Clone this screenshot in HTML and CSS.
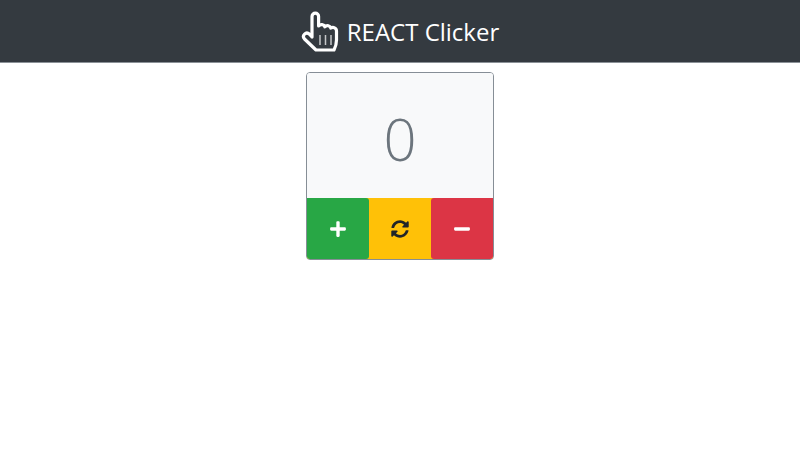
FILE: index.html
```html
<!DOCTYPE html>
<html lang="en">
<head>
    <meta charset="UTF-8">
    <meta name="viewport" content="width=device-width, initial-scale=1.0">
    <title>REACT Clicker</title>
    <link rel="stylesheet" href="styles.css">
</head>
<body>
    <header class="navbar">
        <svg class="logo" viewBox="0 0 40 44" aria-hidden="true">
            <path class="logo-hand" d="M11 28 V7.500 a3.300 3.300 0 0 1 6.600 0 V17 c2-2.200 5.400-1.800 6.200 .8 c2-2 5.400-1.200 6 1.200 c2.400-1.200 5.700-.2 5.700 3 V31 c0 4-1 7-2.500 10 H15 L3.500 30 c-3-3.500 1.500-8 5-4.800 L11 28"/>
            <path class="logo-lines" d="M19 26 V36 M24.500 26 V36 M30 26 V36"/>
        </svg>
        <h1 class="brand">REACT Clicker</h1>
    </header>

    <main class="clicker">
        <div class="count">0</div>
        <div class="actions">
            <button class="btn btn-add" type="button">
                <svg class="icon" viewBox="0 0 448 512"><path d="M416 208H272V64c0-17.670-14.330-32-32-32h-32c-17.670 0-32 14.330-32 32v144H32c-17.670 0-32 14.330-32 32v32c0 17.670 14.330 32 32 32h144v144c0 17.670 14.330 32 32 32h32c17.670 0 32-14.330 32-32V304h144c17.670 0 32-14.330 32-32v-32c0-17.670-14.330-32-32-32z"/></svg>
            </button>
            <button class="btn btn-reset" type="button">
                <svg class="icon" viewBox="0 0 512 512"><path d="M370.720 133.280C339.458 104.008 298.888 87.962 255.848 88c-77.458.068-144.328 53.178-162.791 126.850-1.344 5.363-6.122 9.150-11.651 9.150H24.103c-7.498 0-13.194-6.807-11.807-14.176C33.933 94.924 134.813 8 256 8c66.448 0 126.791 26.136 171.315 68.685L463.030 40.970C478.149 25.851 504 36.559 504 57.941V192c0 13.255-10.745 24-24 24H345.941c-21.382 0-32.090-25.851-16.971-40.971l41.750-41.749zM32 296h134.059c21.382 0 32.090 25.851 16.971 40.971l-41.750 41.750c31.262 29.273 71.835 45.319 114.876 45.280 77.418-.07 144.315-53.144 162.787-126.849 1.344-5.363 6.122-9.150 11.651-9.150h57.304c7.498 0 13.194 6.807 11.807 14.176C478.067 417.076 377.187 504 256 504c-66.448 0-126.791-26.136-171.315-68.685L48.970 471.030C33.851 486.149 8 475.441 8 454.059V320c0-13.255 10.745-24 24-24z"/></svg>
            </button>
            <button class="btn btn-sub" type="button">
                <svg class="icon" viewBox="0 0 448 512"><path d="M416 208H32c-17.670 0-32 14.330-32 32v32c0 17.670 14.330 32 32 32h384c17.670 0 32-14.330 32-32v-32c0-17.670-14.330-32-32-32z"/></svg>
            </button>
        </div>
    </main>
</body>
</html>
```

FILE: styles.css
```css
body {
    margin: 0;
    background: #fff;
    font-family: "Open Sans", "Noto Sans", sans-serif;
}
.navbar {
    display: flex;
    align-items: center;
    justify-content: center;
    gap: 6px;
    height: 63px;
    background: #343a40;
    border-bottom: 1px solid #8b9197;
    box-sizing: border-box;
}
.logo {
    width: 40px;
    height: 44px;
}
.logo-hand {
    fill: none;
    stroke: #fff;
    stroke-width: 3.2;
    stroke-linejoin: round;
    stroke-linecap: round;
}
.logo-lines {
    fill: none;
    stroke: #c4c6c8;
    stroke-width: 1.5;
}
.brand {
    margin: 0;
    padding-top: 1px;
    color: #fff;
    font-size: 24px;
    font-weight: 400;
}
.clicker {
    width: 188px;
    margin: 9px auto 0;
    box-sizing: border-box;
    border: 1px solid #868e96;
    border-radius: 4px;
    overflow: hidden;
}
.count {
    height: 125px;
    background: #f8f9fa;
    color: #6c757d;
    font-size: 58px;
    font-weight: 300;
    line-height: 131px;
    text-align: center;
}
.actions {
    display: flex;
    background: #ffc107;
}
.btn {
    flex: 1;
    height: 61px;
    border: none;
    padding: 0;
    display: flex;
    align-items: center;
    justify-content: center;
}
.btn-add {
    background: #28a745;
    color: #fff;
    border-radius: 0 3px 3px 0;
}
.btn-reset {
    background: #ffc107;
    color: #212529;
}
.btn-sub {
    background: #dc3545;
    color: #fff;
    border-radius: 3px 0 0 3px;
}
.icon {
    width: 18px;
    height: 18px;
    fill: currentColor;
}
```
